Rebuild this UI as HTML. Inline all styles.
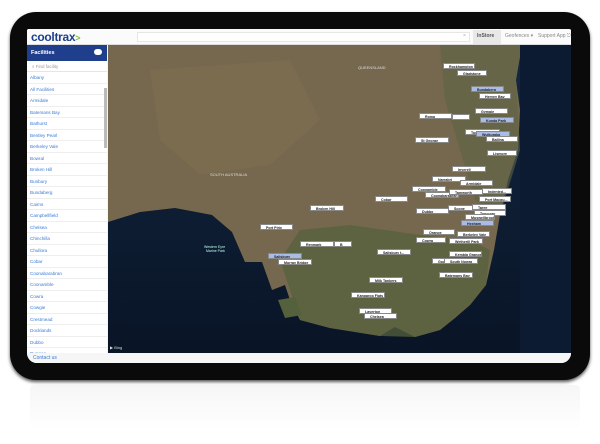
<!DOCTYPE html>
<html><head><meta charset="utf-8"><style>
*{margin:0;padding:0;box-sizing:border-box}
body{width:600px;height:444px;background:#fff;position:relative;overflow:hidden;font-family:"Liberation Sans",sans-serif}
.tab{position:absolute;left:10px;top:12px;width:580px;height:368px;background:#0a0a0a;border-radius:26px;box-shadow:0 2px 3px #555}
.refl{position:absolute;left:30px;top:385px;width:550px;height:45px;background:linear-gradient(#f6f6f6,#fff);border-radius:4px}
.scr{position:absolute;left:27px;top:29px;width:544px;height:334px;background:#f4f4f4;border-radius:2px 2px 10px 10px;overflow:hidden}
.hdr{position:absolute;left:0;top:0;width:544px;height:16px;background:#fbfbfb;border-bottom:1px solid #ddd}
.logo{position:absolute;left:4px;top:1px;font-weight:bold;font-size:12px;color:#1d3f8c;letter-spacing:-0.3px}
.logo span{color:#7fc241;font-size:9px}
.srch{position:absolute;left:110px;top:3px;width:333px;height:10px;background:#fff;border:1px solid #e6e6e6}
.nav{position:absolute;top:4px;font-size:5px;color:#888}
.side{position:absolute;left:0;top:16px;width:80px;height:308px;background:#fff}
.fac{height:16px;background:#1f3f8c;color:#fff;font-size:5.5px;font-weight:bold;padding:5px 4px;position:relative}
.fac i{position:absolute;right:5px;top:4px;width:8px;height:6px;background:#fff;border-radius:3px}
.find{height:11px;font-size:4.5px;color:#999;padding:3px 5px;border-bottom:1px solid #e5e5e5}
.it{height:11.5px;font-size:4.6px;color:#3a7bd5;padding:3px 3px;border-bottom:1px solid #eee}
.sb{position:absolute;left:77px;top:43px;width:3px;height:60px;background:#bbb}
.map{position:absolute;left:81px;top:16px;width:463px;height:308px;overflow:hidden}
.foot{position:absolute;left:0;top:324px;width:544px;height:10px;background:#f6f6f6;font-size:5px;color:#3a7bd5;padding:2px 6px}
.l{position:absolute;height:6px;background:#fff;border:0.5px solid #888;font-size:3.6px;font-weight:bold;color:#222;padding:1px 0 0 5px;white-space:nowrap;overflow:hidden}
.b{background:#a8bce6}
</style></head><body>
<div class="refl"></div>
<div class="tab"></div>
<div class="scr">
<div class="hdr"><div class="logo">cooltrax<span>&gt;</span></div><div class="srch"></div>
<div class="nav" style="left:436px;color:#aaa">×</div>
<div class="nav" style="left:446px;top:1px;height:14px;width:28px;background:#e8e8e8;color:#555;font-weight:bold;padding:3px 4px">InStore</div>
<div class="nav" style="left:478px">Geofences ▾</div>
<div class="nav" style="left:511px">Support App ⎋</div></div>
<div class="side"><div class="fac">Facilities<i></i></div><div class="find">⌕ Find facility</div>
<div class="it">Albany</div><div class="it">All Facilities</div><div class="it">Armidale</div><div class="it">Batemans Bay</div><div class="it">Bathurst</div><div class="it">Bentley Pearl</div><div class="it">Berkeley Vale</div><div class="it">Bowral</div><div class="it">Broken Hill</div><div class="it">Bunbury</div><div class="it">Bundaberg</div><div class="it">Cairns</div><div class="it">Campbellfield</div><div class="it">Chelsea</div><div class="it">Chinchilla</div><div class="it">Chullora</div><div class="it">Cobar</div><div class="it">Coonabarabran</div><div class="it">Coonamble</div><div class="it">Cowra</div><div class="it">Cowgie</div><div class="it">Crestmead</div><div class="it">Docklands</div><div class="it">Dubbo</div><div class="it">Dungog</div>
<div class="sb"></div></div>
<div class="map">
<svg width="463" height="308" viewBox="108 45 463 308" style="position:absolute;left:0;top:0">
<defs><linearGradient id="o" x1="0" y1="0" x2="0" y2="1"><stop offset="0" stop-color="#132841"/><stop offset="1" stop-color="#091426"/></linearGradient></defs>
<rect x="108" y="45" width="463" height="308" fill="url(#o)"/>
<polygon fill="#75684e" points="108,45 522,45 516,80 520,110 518,150 508,180 500,215 494,250 486,285 470,305 455,318 440,330 415,337 395,327 380,336 355,332 330,328 300,320 290,300 285,285 272,290 262,262 245,262 232,232 212,215 175,208 140,212 108,222"/>
<polygon fill="#56623d" opacity=".75" points="300,230 350,225 420,235 470,240 490,250 486,285 470,305 440,330 415,337 380,336 330,328 300,320 290,290 280,260"/>
<polygon fill="#5e6444" opacity=".6" points="440,45 522,45 516,80 520,150 500,215 475,200 460,150 445,100"/>
<polygon fill="#826f52" opacity=".5" points="150,70 290,60 320,120 270,165 200,175 160,140"/>
<polygon fill="#55603c" points="278,300 295,297 302,315 285,318"/>
<rect x="520" y="45" width="51" height="308" fill="#0c1b31"/>
<text x="210" y="176" font-size="4" fill="#ddd">SOUTH AUSTRALIA</text>
<text x="358" y="69" font-size="4" fill="#ddd">QUEENSLAND</text>
<text x="204" y="248" font-size="3.5" fill="#bfe">Western Eyre</text>
<text x="206" y="252" font-size="3.5" fill="#bfe">Marine Park</text>
<text x="110" y="349" font-size="4" fill="#ddd">▶ Bing</text>
</svg>
<div class="l" style="left:335px;top:18px;width:32px">Rockhampton</div>
<div class="l" style="left:349px;top:25px;width:30px">Gladstone</div>
<div class="l b" style="left:363px;top:41px;width:33px">Bundaberg</div>
<div class="l" style="left:371px;top:48px;width:32px">Hervey Bay</div>
<div class="l" style="left:367px;top:63px;width:33px">Gympie</div>
<div class="l" style="left:311px;top:68px;width:33px">Roma</div>
<div class="l" style="left:344px;top:69px;width:18px"></div>
<div class="l b" style="left:372px;top:72px;width:34px">Kunda Park</div>
<div class="l" style="left:357px;top:84px;width:35px">Toowoomba</div>
<div class="l b" style="left:368px;top:86px;width:34px">Wulkuraka</div>
<div class="l" style="left:378px;top:91px;width:32px">Ballina</div>
<div class="l" style="left:307px;top:92px;width:34px">St George</div>
<div class="l" style="left:379px;top:105px;width:30px">Lismore</div>
<div class="l" style="left:344px;top:121px;width:34px">Inverell</div>
<div class="l" style="left:324px;top:131px;width:34px">Narrabri</div>
<div class="l" style="left:352px;top:135px;width:33px">Armidale</div>
<div class="l" style="left:304px;top:141px;width:34px">Coonamble</div>
<div class="l" style="left:317px;top:147px;width:34px">Coonabarabran</div>
<div class="l" style="left:341px;top:144px;width:34px">Tamworth</div>
<div class="l" style="left:374px;top:143px;width:30px">Indented...</div>
<div class="l" style="left:371px;top:151px;width:32px">Port Macqu...</div>
<div class="l" style="left:267px;top:151px;width:33px">Cobar</div>
<div class="l" style="left:202px;top:160px;width:34px">Broken Hill</div>
<div class="l" style="left:308px;top:163px;width:33px">Dubbo</div>
<div class="l" style="left:340px;top:160px;width:30px">Scone</div>
<div class="l" style="left:364px;top:159px;width:34px">Taree</div>
<div class="l" style="left:366px;top:165px;width:32px">Tuncurry</div>
<div class="l" style="left:357px;top:169px;width:30px">Muswellbrook</div>
<div class="l b" style="left:353px;top:175px;width:33px">Hexham</div>
<div class="l" style="left:315px;top:184px;width:32px">Orange</div>
<div class="l" style="left:349px;top:186px;width:33px">Berkeley Vale</div>
<div class="l" style="left:308px;top:192px;width:30px">Cowra</div>
<div class="l" style="left:341px;top:193px;width:34px">Wetherill Park</div>
<div class="l" style="left:152px;top:179px;width:33px">Port Pirie</div>
<div class="l" style="left:192px;top:196px;width:34px">Renmark</div>
<div class="l" style="left:226px;top:196px;width:18px">B</div>
<div class="l b" style="left:160px;top:208px;width:34px">Salisbury</div>
<div class="l" style="left:170px;top:214px;width:34px">Murray Bridge</div>
<div class="l" style="left:269px;top:204px;width:34px">Salisbury t...</div>
<div class="l" style="left:341px;top:206px;width:33px">Kembla Grange</div>
<div class="l" style="left:324px;top:213px;width:20px">Goulburn</div>
<div class="l" style="left:336px;top:213px;width:34px">South Nowra</div>
<div class="l" style="left:331px;top:227px;width:34px">Batemans Bay</div>
<div class="l" style="left:261px;top:232px;width:34px">Milk Tankers</div>
<div class="l" style="left:243px;top:247px;width:34px">Kangaroo Flats</div>
<div class="l" style="left:256px;top:268px;width:33px">Chelsea</div>
<div class="l" style="left:251px;top:263px;width:33px">Laverton</div>
</div>
<div class="foot">Contact us</div>
</div>
</body></html>
